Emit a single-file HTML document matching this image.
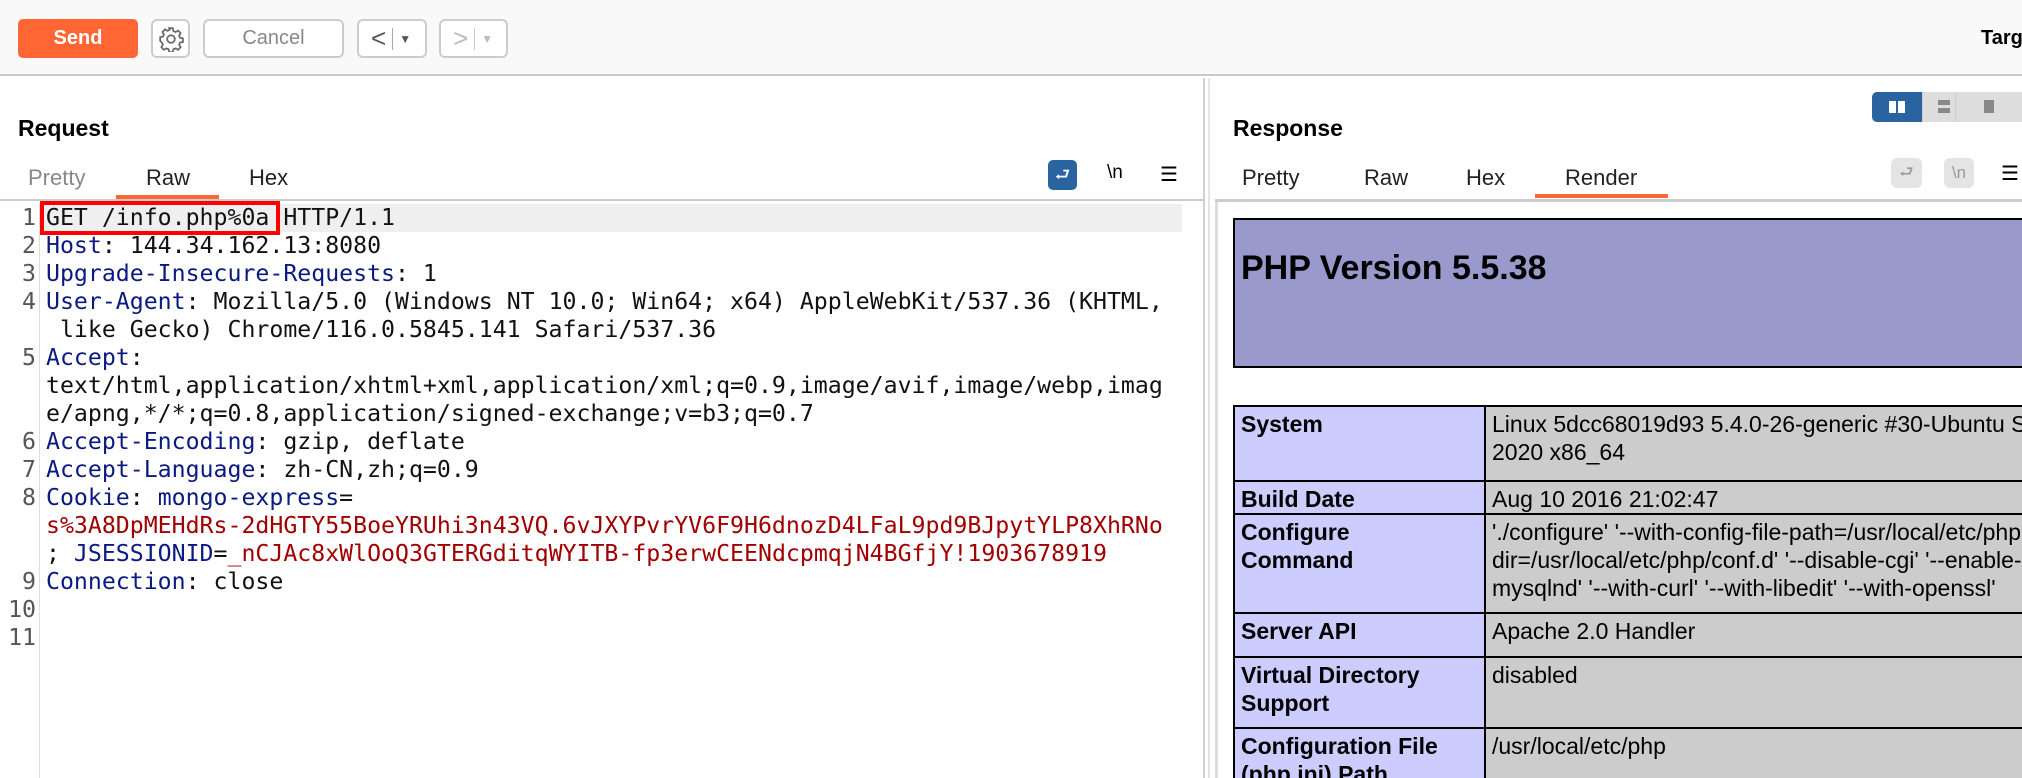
<!DOCTYPE html>
<html><head><meta charset="utf-8"><style>
*{margin:0;padding:0;box-sizing:border-box}
body{width:2022px;height:778px;overflow:hidden;background:#fff;font-family:"Liberation Sans",Arial,sans-serif;position:relative}
.a{position:absolute}
.btn{position:absolute;top:19px;height:39px;border:2px solid #ccc;border-radius:6px;background:#fff;color:#888;font-size:20px;display:flex;align-items:center;justify-content:center}
.tab{position:absolute;top:165px;font-size:22px;color:#222}
.code{position:absolute;left:0;top:204px;font-family:"DejaVu Sans Mono","Liberation Mono",monospace;font-size:23.2px;line-height:28px;white-space:pre}
.ln{position:absolute;left:0;width:36px;text-align:right;color:#555}
.tx{position:absolute;left:46px;color:#111}
.k{color:#0a1a80}.r{color:#a00000}
table{border-collapse:collapse;font-size:23px;line-height:28px;table-layout:fixed}
td{border:2px solid #000;vertical-align:top;padding:3px 6px 0 6px;overflow:hidden}
td.e{background:#ccccff;font-weight:bold}
td.v{background:#cccccc;white-space:nowrap}
</style></head><body>
<div class="a" style="left:0;top:0;width:2022px;height:76px;background:#f9f9f9;border-bottom:2px solid #c8c8c8"></div>
<div class="a" style="left:18px;top:19px;width:120px;height:39px;background:#ff6633;border-radius:5px;color:#fff;font-weight:bold;font-size:20px;display:flex;align-items:center;justify-content:center">Send</div>
<div class="btn" style="left:151px;width:39px"><svg width="26" height="26" viewBox="0 0 24 24" fill="none" stroke="#666" stroke-width="1.6"><circle cx="12" cy="12" r="3.5"/><path d="M10.3 2h3.4l.5 2.6 2 1 2.3-1.4 2.4 2.4-1.4 2.3.9 2 2.6.5v3.4l-2.6.5-.9 2 1.4 2.3-2.4 2.4-2.3-1.4-2 .9-.5 2.6h-3.4l-.5-2.6-2-.9-2.3 1.4-2.4-2.4 1.4-2.3-.9-2L2 13.7v-3.4l2.6-.5.9-2-1.4-2.3 2.4-2.4 2.3 1.4 2-1z"/></svg></div>
<div class="btn" style="left:203px;width:141px">Cancel</div>
<div class="btn" style="left:357px;width:70px;color:#555;font-size:26px;justify-content:flex-start;padding-left:12px">&lt;<span style="display:inline-block;width:1px;height:22px;background:#aaa;margin:0 6px"></span><span style="font-size:12px">▼</span></div>
<div class="btn" style="left:439px;width:69px;color:#bbb;font-size:26px;justify-content:flex-start;padding-left:12px">&gt;<span style="display:inline-block;width:1px;height:22px;background:#ccc;margin:0 6px"></span><span style="font-size:12px">▼</span></div>
<div class="a" style="left:1981px;top:27px;width:41px;overflow:hidden;font-weight:bold;font-size:20px;white-space:nowrap">Target</div>

<div class="a" style="left:1203px;top:78px;width:2px;height:700px;background:#d0d0d0"></div>
<div class="a" style="left:1208px;top:78px;width:2px;height:700px;background:#e4e4e4"></div>

<!-- Request -->
<div class="a" style="left:18px;top:115px;font-size:23px;font-weight:bold">Request</div>
<div class="tab" style="left:28px;color:#888">Pretty</div>
<div class="tab" style="left:146px">Raw</div>
<div class="tab" style="left:249px">Hex</div>
<div class="a" style="left:116px;top:195px;width:103px;height:4px;background:#ff6633"></div>
<div class="a" style="left:0;top:199px;width:1203px;height:2px;background:#ccc"></div>
<div class="a" style="left:1048px;top:160px;width:29px;height:30px;background:#2a64a0;border-radius:5px;color:#fff;font-size:17px;text-align:center;line-height:30px">⮐</div>
<div class="a" style="left:1107px;top:162px;font-size:19px">\n</div>
<div class="a" style="left:1160px;top:162px;font-size:20px">☰</div>
<div class="a" style="left:39px;top:204px;width:1px;height:574px;background:#ddd"></div>
<div class="a" style="left:43px;top:204px;width:1139px;height:28px;background:#efefef"></div>
<div class="code">
<div class="ln" style="top:0">1</div><div class="tx" style="top:0">GET /info.php%0a HTTP/1.1</div>
<div class="ln" style="top:28px">2</div><div class="tx" style="top:28px"><span class="k">Host</span>: 144.34.162.13:8080</div>
<div class="ln" style="top:56px">3</div><div class="tx" style="top:56px"><span class="k">Upgrade-Insecure-Requests</span>: 1</div>
<div class="ln" style="top:84px">4</div><div class="tx" style="top:84px"><span class="k">User-Agent</span>: Mozilla/5.0 (Windows NT 10.0; Win64; x64) AppleWebKit/537.36 (KHTML,</div>
<div class="tx" style="top:112px"> like Gecko) Chrome/116.0.5845.141 Safari/537.36</div>
<div class="ln" style="top:140px">5</div><div class="tx" style="top:140px"><span class="k">Accept</span>:</div>
<div class="tx" style="top:168px">text/html,application/xhtml+xml,application/xml;q=0.9,image/avif,image/webp,imag</div>
<div class="tx" style="top:196px">e/apng,*/*;q=0.8,application/signed-exchange;v=b3;q=0.7</div>
<div class="ln" style="top:224px">6</div><div class="tx" style="top:224px"><span class="k">Accept-Encoding</span>: gzip, deflate</div>
<div class="ln" style="top:252px">7</div><div class="tx" style="top:252px"><span class="k">Accept-Language</span>: zh-CN,zh;q=0.9</div>
<div class="ln" style="top:280px">8</div><div class="tx" style="top:280px"><span class="k">Cookie</span>: <span class="k">mongo-express</span>=</div>
<div class="tx r" style="top:308px">s%3A8DpMEHdRs-2dHGTY55BoeYRUhi3n43VQ.6vJXYPvrYV6F9H6dnozD4LFaL9pd9BJpytYLP8XhRNo</div>
<div class="tx" style="top:336px">; <span class="k">JSESSIONID</span>=<span class="r">_nCJAc8xWlOoQ3GTERGditqWYITB-fp3erwCEENdcpmqjN4BGfjY!1903678919</span></div>
<div class="ln" style="top:364px">9</div><div class="tx" style="top:364px"><span class="k">Connection</span>: close</div>
<div class="ln" style="top:392px">10</div>
<div class="ln" style="top:420px">11</div>
</div>
<div class="a" style="left:40px;top:201px;width:240px;height:34px;border:4px solid #ff0000"></div>

<!-- Response -->
<div class="a" style="left:1210px;top:78px;width:812px;height:700px;overflow:hidden">
<div style="position:relative;left:-1210px;top:-78px;width:2022px;height:778px">
<div class="a" style="left:1872px;top:92px;width:150px;height:30px;background:#ddd;border-radius:5px 0 0 5px"></div>
<div class="a" style="left:1872px;top:92px;width:50px;height:30px;background:#2a64a0;border-radius:5px 0 0 5px"></div>
<div class="a" style="left:1889px;top:101px;width:7px;height:12px;background:#fff"></div>
<div class="a" style="left:1898px;top:101px;width:7px;height:12px;background:#fff"></div>
<div class="a" style="left:1922px;top:92px;width:1px;height:30px;background:#ccc"></div>
<div class="a" style="left:1938px;top:100px;width:12px;height:5px;background:#888"></div>
<div class="a" style="left:1938px;top:108px;width:12px;height:5px;background:#888"></div>
<div class="a" style="left:1955px;top:92px;width:1px;height:30px;background:#ccc"></div>
<div class="a" style="left:1984px;top:100px;width:10px;height:13px;background:#888"></div>
<div class="a" style="left:1233px;top:115px;font-size:23px;font-weight:bold">Response</div>
<div class="tab" style="left:1242px">Pretty</div>
<div class="tab" style="left:1364px">Raw</div>
<div class="tab" style="left:1466px">Hex</div>
<div class="tab" style="left:1565px">Render</div>
<div class="a" style="left:1535px;top:194px;width:133px;height:4px;background:#ff6633"></div>
<div class="a" style="left:1215px;top:199px;width:807px;height:3px;background:#ccc"></div>
<div class="a" style="left:1891px;top:158px;width:31px;height:30px;background:#e4e4e4;border-radius:6px;color:#999;text-align:center;line-height:30px;font-size:16px">⮐</div>
<div class="a" style="left:1944px;top:158px;width:30px;height:30px;background:#e4e4e4;border-radius:6px;color:#999;text-align:center;line-height:30px;font-size:17px">\n</div>
<div class="a" style="left:2001px;top:161px;font-size:20px">☰</div>
<div class="a" style="left:1215px;top:202px;width:3px;height:576px;background:#ddd"></div>
<div class="a" style="left:1233px;top:218px;width:800px;height:150px;background:#9999cc;border:2px solid #000"></div>
<div class="a" style="left:1241px;top:249px;font-size:34px;font-weight:bold">PHP Version 5.5.38</div>
<table class="a" style="left:1233px;top:405px;width:900px">
<colgroup><col style="width:251px"><col style="width:649px"></colgroup>
<tr style="height:75px"><td class="e">System</td><td class="v">Linux 5dcc68019d93 5.4.0-26-generic #30-Ubuntu SMP Mon Apr 20<br>2020 x86_64</td></tr>
<tr style="height:32px"><td class="e">Build Date</td><td class="v">Aug 10 2016 21:02:47</td></tr>
<tr style="height:99px"><td class="e">Configure<br>Command</td><td class="v">'./configure' '--with-config-file-path=/usr/local/etc/php' '--with-config-file-scan-<br>dir=/usr/local/etc/php/conf.d' '--disable-cgi' '--enable-<br>mysqlnd' '--with-curl' '--with-libedit' '--with-openssl'</td></tr>
<tr style="height:44px"><td class="e">Server API</td><td class="v">Apache 2.0 Handler</td></tr>
<tr style="height:71px"><td class="e">Virtual Directory<br>Support</td><td class="v">disabled</td></tr>
<tr style="height:71px"><td class="e">Configuration File<br>(php.ini) Path</td><td class="v">/usr/local/etc/php</td></tr>
</table>
</div></div>
</body></html>
